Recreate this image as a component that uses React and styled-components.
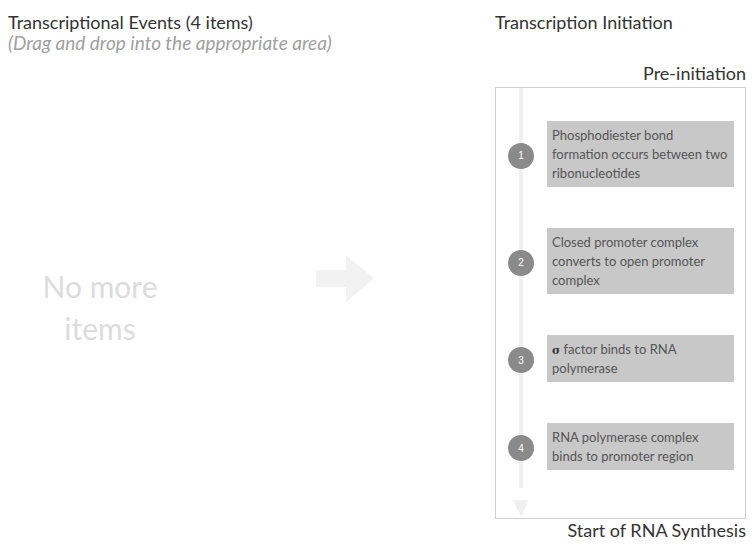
import React from "react";
import styled, { createGlobalStyle } from "styled-components";

const GlobalStyle = createGlobalStyle`
  html, body { margin: 0; padding: 0; background: #fff; }
  body { font-family: Lato, "Open Sans", sans-serif; color: #333; }
`;

const Page = styled.div`
  display: grid;
  grid-template-columns: 184px 1fr 251px;
  grid-template-rows: auto 1fr;
  padding: 8px;
  width: 754px;
  box-sizing: border-box;
`;

const LeftHeader = styled.div`
  grid-column: 1 / 3;
  grid-row: 1;
  white-space: nowrap;
`;

const Title = styled.div`
  font-size: 18px;
  line-height: 22px;
  color: #333;
  margin-top: 3px;
`;

const Subtitle = styled.div`
  font-size: 19px;
  line-height: 22px;
  font-style: italic;
  color: #a0a0a0;
  margin-top: -1px;
`;

const DropArea = styled.div`
  grid-column: 1;
  grid-row: 2;
  display: flex;
  align-items: flex-start;
  justify-content: center;
  padding-top: 211px;
`;

const Empty = styled.div`
  font-size: 30px;
  line-height: 42px;
  color: #dcdcdc;
  text-align: center;
  width: 130px;
`;

const ArrowCell = styled.div`
  grid-column: 2;
  grid-row: 2;
  display: flex;
  justify-content: center;
  padding-top: 201px;
  padding-left: 3px;
`;

const RightColumn = styled.div`
  grid-column: 3;
  grid-row: 1 / 3;
  display: flex;
  flex-direction: column;
`;

const RightTitle = styled.div`
  font-size: 18px;
  line-height: 22px;
  color: #333;
  margin-top: 3px;
`;

const EndLabel = styled.div`
  font-size: 18px;
  line-height: 22px;
  color: #333;
  text-align: right;
  margin-top: ${(p) => p.$top || 0}px;
  margin-bottom: ${(p) => p.$bottom || 0}px;
`;

const Timeline = styled.div`
  position: relative;
  border: 1px solid #d0d0d0;
  padding: 33px 11px 48px 12px;
  display: flex;
  flex-direction: column;
  gap: 41px;

  &::before {
    content: "";
    position: absolute;
    left: 23px;
    top: 0;
    width: 4px;
    height: calc(100% - 30px);
    background: #f0f0f0;
  }
  &::after {
    content: "";
    position: absolute;
    left: 17px;
    bottom: 1px;
    border-left: 8px solid transparent;
    border-right: 8px solid transparent;
    border-top: 17px solid #f0f0f0;
  }
`;

const Row = styled.div`
  position: relative;
  z-index: 1;
  display: flex;
  align-items: center;
  gap: 13px;
`;

const Badge = styled.div`
  flex: none;
  width: 26px;
  height: 26px;
  margin-top: 3px;
  border-radius: 50%;
  background: #8a8a8a;
  color: #fff;
  font-family: "Liberation Sans", Arial, sans-serif;
  font-size: 10px;
  display: flex;
  align-items: center;
  justify-content: center;
`;

const Card = styled.div`
  flex: 1;
  background: #c8c8c8;
  color: #555;
  font-size: 13px;
  line-height: 19px;
  padding: 5px 6px 4px 5px;
`;

const Sigma = styled.b`
  font-family: "DejaVu Serif", serif;
  font-size: 11px;
  line-height: 1;
  color: #333;
`;

const items = [
  { n: 1, text: "Phosphodiester bond formation occurs between two ribonucleotides" },
  { n: 2, text: "Closed promoter complex converts to open promoter complex" },
  { n: 3, text: <><Sigma>σ</Sigma> factor binds to RNA polymerase</> },
  { n: 4, text: "RNA polymerase complex binds to promoter region" },
];

export default function App() {
  return (
    <>
      <GlobalStyle />
      <Page>
        <LeftHeader>
          <Title>Transcriptional Events (4 items)</Title>
          <Subtitle>(Drag and drop into the appropriate area)</Subtitle>
        </LeftHeader>
        <DropArea>
          <Empty>No more items</Empty>
        </DropArea>
        <ArrowCell>
          <svg width="58" height="47" viewBox="0 0 58 47">
            <path d="M0 15 H30 V0 L58 23.5 L30 47 V32 H0 Z" fill="#f2f2f2" />
          </svg>
        </ArrowCell>
        <RightColumn>
          <RightTitle>Transcription Initiation</RightTitle>
          <EndLabel $top={29} $bottom={3}>Pre-initiation</EndLabel>
          <Timeline>
            {items.map((it) => (
              <Row key={it.n}>
                <Badge>{it.n}</Badge>
                <Card>{it.text}</Card>
              </Row>
            ))}
          </Timeline>
          <EndLabel>Start of RNA Synthesis</EndLabel>
        </RightColumn>
      </Page>
    </>
  );
}
